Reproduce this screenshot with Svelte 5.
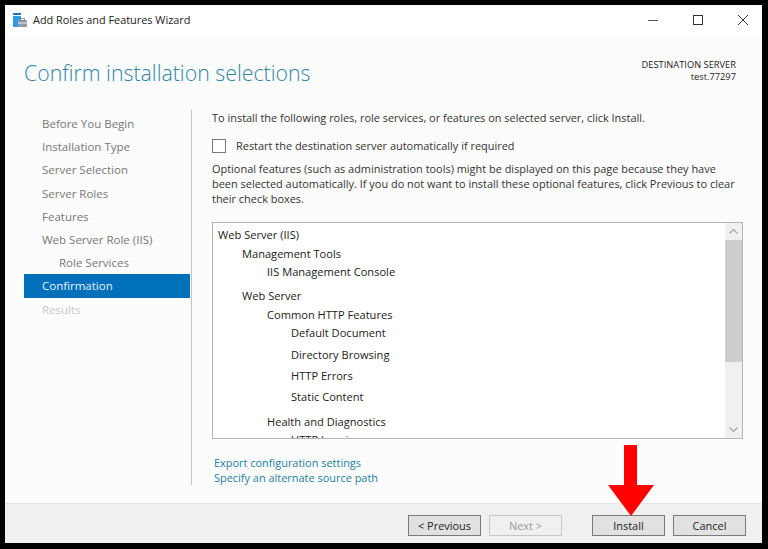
<script>
	const steps = [
		{ label: "Before You Begin" },
		{ label: "Installation Type" },
		{ label: "Server Selection" },
		{ label: "Server Roles" },
		{ label: "Features" },
		{ label: "Web Server Role (IIS)" },
		{ label: "Role Services", sub: true },
		{ label: "Confirmation", active: true },
		{ label: "Results", disabled: true }
	];

	// level = indent, height = room the row takes
	const tree = [
		{ text: "Web Server (IIS)", level: 0, height: 19 },
		{ text: "Management Tools", level: 1, height: 18 },
		{ text: "IIS Management Console", level: 2, height: 24 },
		{ text: "Web Server", level: 1, height: 19 },
		{ text: "Common HTTP Features", level: 2, height: 18 },
		{ text: "Default Document", level: 3, height: 22 },
		{ text: "Directory Browsing", level: 3, height: 21 },
		{ text: "HTTP Errors", level: 3, height: 21 },
		{ text: "Static Content", level: 3, height: 25 },
		{ text: "Health and Diagnostics", level: 2, height: 18 },
		{ text: "HTTP Logging", level: 3, height: 18 }
	];
</script>

<div class="window">
	<div class="titlebar">
		<svg class="appicon" width="14" height="14" viewBox="0 0 14 14">
			<rect x="0" y="0" width="8" height="2" fill="#1b74b8" />
			<rect x="0" y="3" width="8" height="11" fill="#2f9be0" />
			<rect x="5" y="7" width="9" height="7" fill="#8f9ca6" />
			<rect x="5" y="9.5" width="9" height="1" fill="#e4e9ec" />
			<rect x="7.5" y="5.5" width="4" height="2" fill="none" stroke="#76848e" stroke-width="0.8" />
		</svg>
		<span class="apptitle">Add Roles and Features Wizard</span>
		<div class="controls">
			<svg width="12" height="12" viewBox="0 0 12 12"><path d="M1 6.5h10" stroke="#555" stroke-width="1" /></svg>
			<svg width="12" height="12" viewBox="0 0 12 12"><rect x="1.5" y="1.5" width="9" height="9" fill="none" stroke="#333" stroke-width="1" /></svg>
			<svg width="12" height="12" viewBox="0 0 12 12"><path d="M1 1l10 10M11 1L1 11" stroke="#333" stroke-width="1" /></svg>
		</div>
	</div>

	<div class="header">
		<h1>Confirm installation selections</h1>
		<div class="dest">
			<div>DESTINATION SERVER</div>
			<div>test.77297</div>
		</div>
	</div>

	<div class="content">
		<nav class="steps">
			{#each steps as step}
				<div class="step" class:sub={step.sub} class:active={step.active} class:disabled={step.disabled}>{step.label}</div>
			{/each}
		</nav>

		<div class="main">
			<p class="intro">To install the following roles, role services, or features on selected server, click Install.</p>
			<div class="restart">
				<span class="checkbox"></span>
				<span>Restart the destination server automatically if required</span>
			</div>
			<p class="optional">Optional features (such as administration tools) might be displayed on this page because they have been selected automatically. If you do not want to install these optional features, click Previous to clear their check boxes.</p>

			<div class="listbox">
				<div class="tree">
					{#each tree as row}
						<div class="row level{row.level}" style="height: {row.height}px">{row.text}</div>
					{/each}
				</div>
				<div class="scrollbar">
					<svg class="arrow" width="17" height="17" viewBox="0 0 17 17"><path d="M4.5 10.5l4-4 4 4" fill="none" stroke="#a6a6a6" stroke-width="1.2" /></svg>
					<div class="track"><div class="thumb"></div></div>
					<svg class="arrow" width="17" height="17" viewBox="0 0 17 17"><path d="M4.5 6.5l4 4 4-4" fill="none" stroke="#a6a6a6" stroke-width="1.2" /></svg>
				</div>
			</div>

			<div class="links">
				<span class="link">Export configuration settings</span>
				<span class="link">Specify an alternate source path</span>
			</div>
		</div>
	</div>

	<div class="footer">
		<button>&lt; Previous</button>
		<button class="next" disabled>Next &gt;</button>
		<button class="install">Install</button>
		<button>Cancel</button>
	</div>

	<svg class="redarrow" width="46" height="71" viewBox="0 0 46 71">
		<path d="M16 0h13v40h17L23 71 0 40h16z" fill="#fe0000" />
	</svg>
</div>

<style>
	:global(body) {
		background: #000;
		height: 549px;
		overflow: hidden;
	}

	.window {
		position: relative;
		box-sizing: border-box;
		width: 757px;
		height: 538px;
		margin: 5px 0 0 5px;
		background: #fcfcfc;
		display: flex;
		flex-direction: column;
		font-family: "Open Sans", "Noto Sans", sans-serif;
		font-size: 10.95px;
		color: #333;
	}

	.titlebar {
		flex: none;
		height: 29px;
		background: #fff;
		display: flex;
		align-items: center;
		padding-left: 8px;
	}

	.appicon {
		margin-right: 6px;
	}

	.apptitle {
		font-size: 10.9px;
		color: #222;
	}

	.controls {
		margin-left: auto;
		margin-right: 13px;
		display: flex;
		gap: 33px;
	}

	.header {
		flex: none;
		height: 76px;
		display: flex;
		justify-content: space-between;
		padding: 0 26px 0 19px;
		box-sizing: border-box;
	}

	h1 {
		margin: 24px 0 0;
		font-size: 21.3px;
		line-height: 30px;
		font-weight: 300;
		color: #2f86a8;
	}

	.dest {
		margin-top: 25px;
		text-align: right;
		font-size: 9.3px;
		line-height: 12px;
		color: #222;
	}

	.content {
		flex: none;
		height: 375px;
		display: flex;
	}

	.steps {
		box-sizing: border-box;
		flex: none;
		width: 168px;
		margin-left: 19px;
		margin-right: 20px;
		padding-top: 2px;
		border-right: 1px solid #c4c4c4;
	}

	.step {
		height: 23.2px;
		line-height: 24.4px;
		width: 166px;
		box-sizing: border-box;
		padding-left: 18px;
		font-size: 11.5px;
		color: #777;
	}

	.step.sub {
		padding-left: 35px;
	}

	.step.active {
		background: #0070bb;
		color: #e8f2f8;
	}

	.step.disabled {
		color: #c8c8c8;
	}

	.main {
		flex: none;
		width: 531px;
		display: flex;
		flex-direction: column;
	}

	p {
		margin: 0;
	}

	.intro {
		line-height: 16px;
	}

	.restart {
		display: flex;
		align-items: center;
		margin-top: 12px;
		height: 15px;
	}

	.checkbox {
		box-sizing: border-box;
		width: 14px;
		height: 14px;
		border: 1px solid #777;
		background: #fff;
		margin-right: 10px;
	}

	.optional {
		margin-top: 8px;
		line-height: 15px;
		height: 46px;
	}

	.listbox {
		box-sizing: border-box;
		margin-top: 15px;
		height: 218px;
		border: 1px solid #b5b5b5;
		background: #fff;
		display: flex;
		overflow: hidden;
	}

	.tree {
		flex: 1;
		padding: 3px 0 0 5px;
		overflow: hidden;
		font-size: 11.1px;
	}

	.row {
		line-height: 17px;
		white-space: nowrap;
		color: #222;
	}

	.level1 {
		padding-left: 24px;
	}

	.level2 {
		padding-left: 49px;
	}

	.level3 {
		padding-left: 73px;
	}

	.scrollbar {
		flex: none;
		width: 17px;
		background: #f0f0f0;
		display: flex;
		flex-direction: column;
	}

	.arrow {
		flex: none;
	}

	.track {
		flex: 1;
	}

	.thumb {
		height: 122px;
		background: #cdcdcd;
	}

	.links {
		margin-top: 16px;
		padding-left: 2px;
		display: flex;
		flex-direction: column;
		line-height: 15px;
	}

	.link {
		color: #1b7f9f;
	}

	.footer {
		position: relative;
		flex: none;
		box-sizing: border-box;
		margin-top: 18px;
		height: 40px;
		background: #f0f0f0;
		border-top: 1px solid #e4e4e4;
		display: flex;
		justify-content: flex-end;
		align-items: flex-start;
		padding: 11px 16px 0 0;
		gap: 8px;
	}

	button {
		box-sizing: border-box;
		width: 73px;
		height: 21px;
		padding: 0;
		border: 1px solid #7a7a7a;
		border-radius: 0;
		background: #e1e1e1;
		font: inherit;
		color: #222;
	}

	button:disabled {
		background: #f0f0f0;
		border-color: #c8c8c8;
		color: #9a9a9a;
	}

	.install {
		margin-left: 22px;
	}

	.redarrow {
		position: absolute;
		left: 603px;
		top: 440px;
	}
</style>
